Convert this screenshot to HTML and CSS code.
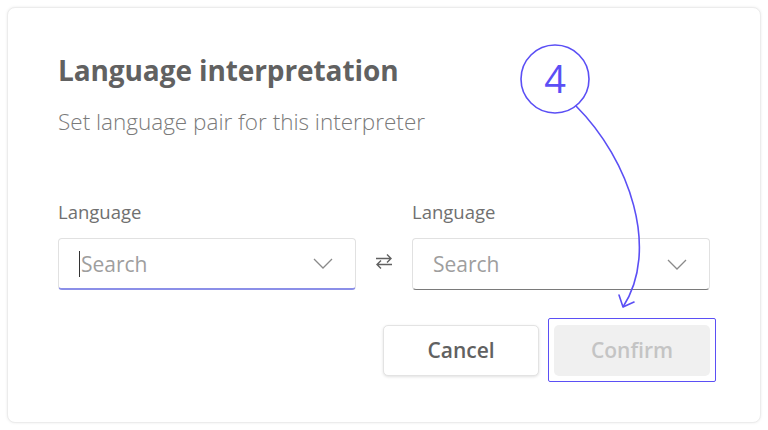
FILE: index.html
```html
<!DOCTYPE html>
<html lang="en">
<head>
<meta charset="utf-8">
<title>Language interpretation</title>
<link rel="stylesheet" href="styles.css">
</head>
<body>
<div class="page">
  <section class="card">
    <h1 class="title">Language interpretation</h1>
    <p class="subtitle">Set language pair for this interpreter</p>
    <div class="fields">
      <div class="field">
        <label class="label">Language</label>
        <div class="input input-active">
          <span class="caret"></span>
          <span class="placeholder">Search</span>
          <svg class="chev" width="20" height="11" viewBox="0 0 20 11"><path d="M1 1 L10 10 L19 1" fill="none" stroke="#8a8a8a" stroke-width="1.3"/></svg>
        </div>
      </div>
      <div class="swap">
        <svg width="18" height="16" viewBox="0 0 18 16"><path d="M1 5.5 H16 M12 1.5 L16 5.5 L12 9.5" fill="none" stroke="#616161" stroke-width="1.4"/><path d="M17 11.5 H2 M6 7.5 L2 11.5 L6 15.5" fill="none" stroke="#616161" stroke-width="1.4"/></svg>
      </div>
      <div class="field">
        <label class="label">Language</label>
        <div class="input">
          <span class="placeholder pad">Search</span>
          <svg class="chev" width="20" height="11" viewBox="0 0 20 11"><path d="M1 1 L10 10 L19 1" fill="none" stroke="#8a8a8a" stroke-width="1.3"/></svg>
        </div>
      </div>
    </div>
    <div class="actions">
      <button class="btn btn-cancel">Cancel</button>
      <div class="highlight"><button class="btn btn-confirm" disabled>Confirm</button></div>
    </div>
    <svg class="annot" width="768" height="430" viewBox="0 0 768 430">
      <circle cx="555" cy="79" r="34" fill="none" stroke="#5b4ff5" stroke-width="1.6"/>
      <text x="555" y="93" text-anchor="middle" font-family="Open Sans, sans-serif" font-size="38" fill="#5b4ff5">4</text>
      <path d="M576 106 C630 160 660 250 623 307" fill="none" stroke="#5b4ff5" stroke-width="1.6"/>
      <path d="M619 295 L623 307 L634 302" fill="none" stroke="#5b4ff5" stroke-width="1.6" stroke-linecap="round" stroke-linejoin="round"/>
    </svg>
  </section>
</div>
</body>
</html>
```
FILE: styles.css
```css
* { box-sizing: border-box; }
html, body { margin: 0; padding: 0; background: #ffffff; }
body { font-family: "Open Sans", "Noto Sans", sans-serif; }
.page { padding: 7px; width: 768px; height: 430px; }
.card {
  position: relative;
  width: 754px;
  height: 416px;
  border: 1px solid #ececec;
  border-radius: 8px;
  box-shadow: 0 0 3px rgba(0,0,0,0.08);
  padding: 44px 50px 0 50px;
  background: #fff;
}
.annot { position: absolute; left: -8px; top: -8px; pointer-events: none; }
.title {
  margin: 0;
  font-size: 28px;
  line-height: 36px;
  font-weight: 700;
  color: #616161;
  letter-spacing: -0.1px;
}
.subtitle {
  margin: 20px 0 0 0;
  font-size: 22.5px;
  line-height: 28px;
  color: #7a7a7a;
  font-weight: 300;
}
.fields {
  margin-top: 64px;
  display: flex;
  align-items: flex-end;
}
.field { width: 298px; display: flex; flex-direction: column; }
.label { font-size: 18.5px; line-height: 24px; color: #707070; margin-bottom: 14px; font-weight: 400; }
.input {
  height: 52px;
  border: 1px solid #e1e1e1;
  border-bottom: 1px solid #7a7a7a;
  border-radius: 4px;
  display: flex;
  align-items: center;
  padding: 0 22px 0 20px;
  position: relative;
}
.input-active { border-bottom: 2px solid #8b8fe8; }
.caret { width: 1px; height: 26px; background: #333; margin-right: 1px; }
.placeholder { flex: 1; font-size: 21px; color: #9e9e9e; }
.chev { flex: none; }
.swap { width: 56px; height: 52px; display: flex; align-items: center; justify-content: center; padding-bottom: 6px; }
.actions {
  margin-top: 28px;
  display: flex;
  justify-content: flex-end;
  align-items: center;
  margin-right: -6px;
  gap: 9px;
}
.btn {
  width: 156px;
  height: 51px;
  border-radius: 5px;
  font-family: inherit;
  font-size: 21px;
  font-weight: 600;
}
.btn-cancel {
  background: #fff;
  border: 1px solid #e3e3e3;
  color: #616161;
  box-shadow: 0 1px 3px rgba(0,0,0,0.12);
}
.highlight {
  border: 1.5px solid #5b4ff5;
  border-radius: 2px;
  padding: 5px 5px;
  height: 64px;
  display: flex;
  align-items: center;
}
.btn-confirm {
  background: #f0f0f0;
  border: none;
  color: #c4c4c4;
}
```
